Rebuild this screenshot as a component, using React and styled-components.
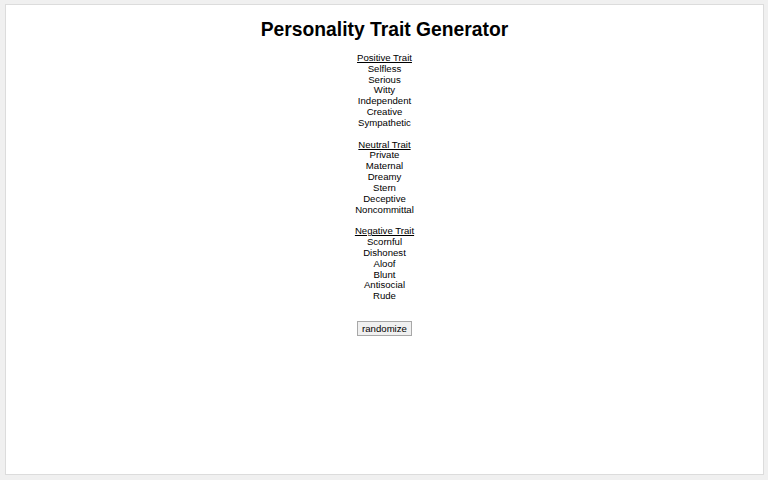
import { styled, createGlobalStyle } from "styled-components";

const GlobalStyle = createGlobalStyle`
  html, body {
    margin: 0;
    padding: 0;
    background: #f0f0f0;
  }
  body {
    font-family: "Liberation Sans", Arial, sans-serif;
    color: #000;
  }
`;

const traits = [
  {
    title: "Positive Trait",
    items: ["Selfless", "Serious", "Witty", "Independent", "Creative", "Sympathetic"],
  },
  {
    title: "Neutral Trait",
    items: ["Private", "Maternal", "Dreamy", "Stern", "Deceptive", "Noncommittal"],
  },
  {
    title: "Negative Trait",
    items: ["Scornful", "Dishonest", "Aloof", "Blunt", "Antisocial", "Rude"],
  },
];

const App = () => {
  return (
    <>
      <GlobalStyle />
      <Page>
        <Title>Personality Trait Generator</Title>
        <Groups>
          {traits.map((group) => (
            <Group key={group.title}>
              <Heading>{group.title}</Heading>
              {group.items.map((item) => (
                <Trait key={item}>{item}</Trait>
              ))}
            </Group>
          ))}
        </Groups>
        <Button type="button">randomize</Button>
      </Page>
    </>
  );
};

const Page = styled.div`
  box-sizing: border-box;
  margin: 4px 4px 0 5px;
  height: 471px;
  background: #fff;
  border: 1px solid #dcdcdc;
  display: flex;
  flex-direction: column;
  align-items: center;
  padding-top: 13px;
`;

const Title = styled.h1`
  margin: 0;
  font-size: 19.3px;
  line-height: 23px;
  font-weight: bold;
`;

const Groups = styled.div`
  margin-top: 12px;
  display: flex;
  flex-direction: column;
  align-items: center;
  gap: 10.8px;
`;

const Group = styled.div`
  display: flex;
  flex-direction: column;
  align-items: center;
  font-size: 9.6px;
  line-height: 10.83px;
`;

const Heading = styled.div`
  text-decoration: underline;
`;

const Trait = styled.div``;

const Button = styled.button`
  margin-top: 19px;
  font-family: "Liberation Sans", Arial, sans-serif;
  font-size: 9.6px;
  line-height: 11px;
  padding: 1px 4px;
  color: #000;
  background: #f0f0f0;
  border: 1px solid #a8a8a8;
  border-radius: 0;
`;

export default App;
